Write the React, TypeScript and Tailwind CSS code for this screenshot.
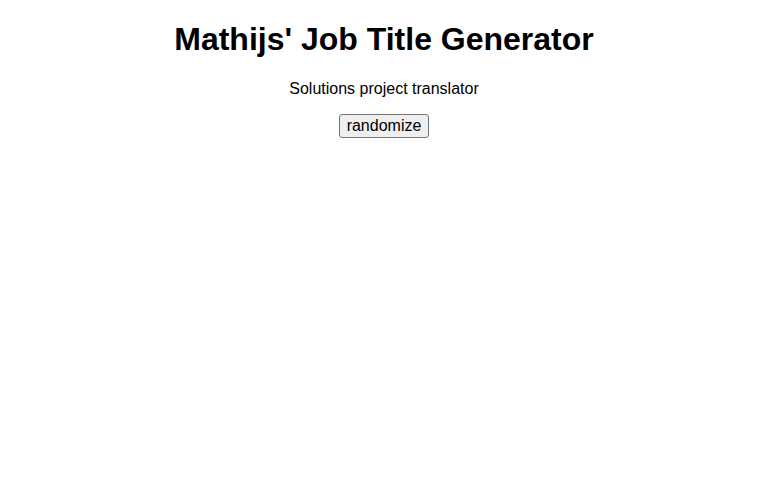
export default function App() {
  return (
    <main className="flex flex-col items-center text-center text-black bg-white min-h-screen font-['Liberation_Sans',Arial,sans-serif]">
      <h1 className="mt-[21px] text-[32px] leading-[37px] font-bold">Mathijs' Job Title Generator</h1>
      <p className="mt-[22px] text-base leading-[18px]">Solutions project translator</p>
      <button
        type="button"
        className="mt-4 h-6 px-[7px] text-base leading-[18px] bg-[#efefef] border border-[#767676] rounded-[3px] hover:bg-[#e5e5e5]"
      >
        randomize
      </button>
    </main>
  );
}
